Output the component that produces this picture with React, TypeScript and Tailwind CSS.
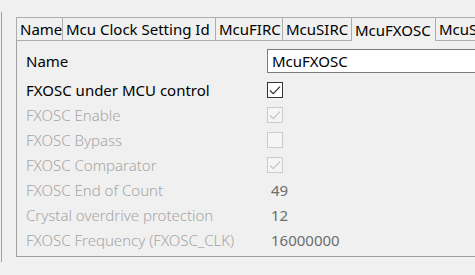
const tabs = [
  { label: "Name", w: "w-[47px]" },
  { label: "Mcu Clock Setting Id", w: "w-[153px]" },
  { label: "McuFIRC", w: "w-[67px]" },
  { label: "McuSIRC", w: "w-[69px]" },
  { label: "McuFXOSC", w: "w-[84px]", active: true },
  { label: "McuSIRC", w: "w-[80px]" },
]

type Row =
  | { label: string; kind: "check"; checked: boolean; disabled?: boolean }
  | { label: string; kind: "value"; value: string }

const rows: Row[] = [
  { label: "FXOSC under MCU control", kind: "check", checked: true },
  { label: "FXOSC Enable", kind: "check", checked: true, disabled: true },
  { label: "FXOSC Bypass", kind: "check", checked: false, disabled: true },
  { label: "FXOSC Comparator", kind: "check", checked: true, disabled: true },
  { label: "FXOSC End of Count", kind: "value", value: "49" },
  { label: "Crystal overdrive protection", kind: "value", value: "12" },
  { label: "FXOSC Frequency (FXOSC_CLK)", kind: "value", value: "16000000" },
]

function Checkbox({ checked, disabled }: { checked: boolean; disabled?: boolean }) {
  return (
    <div
      className={`w-4 h-4 border flex items-center justify-center ${
        disabled ? "border-[#cccccc] bg-[#f5f5f5]" : "border-[#333333] bg-white"
      }`}
    >
      {checked && (
        <svg width="14" height="14" viewBox="0 0 14 14" fill="none">
          <path
            d="M2 7.5 L5.3 10.6 L12 3.6"
            stroke={disabled ? "#c6c6c6" : "#333333"}
            strokeWidth="1.3"
          />
        </svg>
      )}
    </div>
  )
}

export default function App() {
  return (
    <div className="w-[475px] h-[275px] bg-[#f0f0f0] overflow-hidden text-[15px] font-['Noto_Sans',sans-serif]">
      <div className="pt-[12px]">
        <div className="ml-px h-[250px] border-l border-[#a0a0a0] pl-[14px] pt-[5px]">
          {/* Tabs */}
          <div className="flex h-[24px] w-[600px]">
            {tabs.map((t, i) => (
              <div
                key={i}
                className={`${t.w} shrink-0 h-full flex items-center pl-[3px] pt-px border-t border-r border-[#adadad] leading-none text-black whitespace-nowrap overflow-hidden ${
                  i === 0 ? "border-l" : ""
                } ${t.active ? "" : "border-b"}`}
              >
                {t.label}
              </div>
            ))}
          </div>

          {/* Panel */}
          <div className="w-[600px] h-[216px] border-l border-b border-r border-[#a0a0a0] pl-[9px] pt-[8px]">
            <div className="flex items-center h-[24px]">
              <div className="w-[241px] text-black pt-px">Name</div>
              <div className="h-[24px] flex-1 border border-[#7a7a7a] bg-white flex items-center pl-[4px] pt-px text-black">
                McuFXOSC
              </div>
            </div>
            <div className="mt-[4px]">
              {rows.map((r) => {
                const dim = r.kind === "value" || r.disabled
                return (
                  <div key={r.label} className="flex items-center h-[25px]">
                    <div
                      className={`w-[241px] whitespace-nowrap pt-[2px] ${
                        dim ? "text-[#a6a6a6] font-light" : "text-black"
                      }`}
                    >
                      {r.label}
                    </div>
                    {r.kind === "check" ? (
                      <Checkbox checked={r.checked} disabled={r.disabled} />
                    ) : (
                      <div className="pl-[4px] pt-[2px] text-[#6d6d6d]">{r.value}</div>
                    )}
                  </div>
                )
              })}
            </div>
          </div>
        </div>
      </div>
    </div>
  )
}
